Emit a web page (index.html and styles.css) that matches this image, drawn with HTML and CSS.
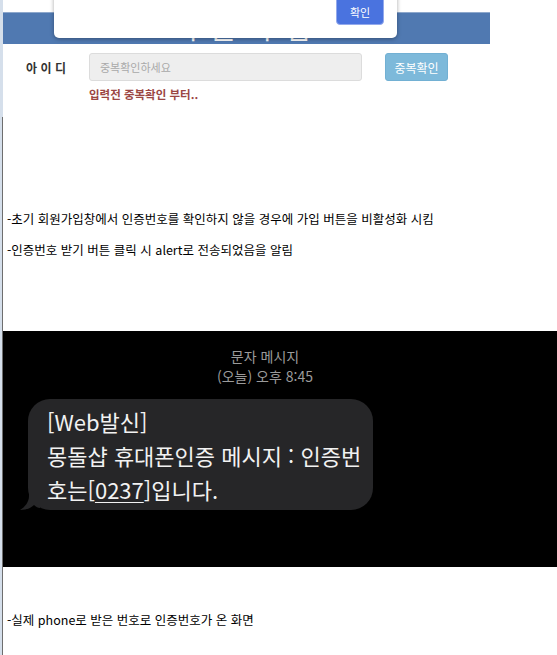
FILE: index.html
```html
<!DOCTYPE html>
<html lang="ko">
<head>
    <meta charset="UTF-8">
    <meta name="viewport" content="width=device-width, initial-scale=1.0">
    <title>회원가입 인증</title>
    <link rel="stylesheet" href="styles.css">
</head>
<body>
    <div class="page">
        <div class="doc">
            <!-- 회원가입 화면 캡처 -->
            <div class="shot-top">
                <div class="band">
                    <div class="band-title">회 원 가 입</div>
                </div>
                <div class="modal">
                    <button class="modal-ok">확인</button>
                </div>
                <div class="form-row">
                    <label class="form-label" for="userId">아 이 디</label>
                    <input class="form-input" id="userId" type="text" placeholder="중복확인하세요">
                    <button class="btn-check">중복확인</button>
                </div>
                <div class="form-error">입력전 중복확인 부터..</div>
            </div>

            <p class="note note-first">-초기 회원가입창에서 인증번호를 확인하지 않을 경우에 가입 버튼을 비활성화 시킴</p>
            <p class="note note-second">-인증번호 받기 버튼 클릭 시 alert로 전송되었음을 알림</p>

            <!-- 문자 메시지 캡처 -->
            <div class="sms">
                <div class="sms-head">
                    <div>문자 메시지</div>
                    <div>(오늘) 오후 8:45</div>
                </div>
                <div class="bubble">
                    <svg class="bubble-tail" width="20" height="24" viewBox="0 0 20 24">
                        <path d="M9 0 L9 10 C9 16 5 21 0 24 C6 24 11 22 14 19 C16 21 18 22 20 22 L20 0 Z" fill="#262628"/>
                    </svg>
                    [Web발신]<br>
                    몽돌샵 휴대폰인증 메시지 : 인증번<br>
                    호는[<span class="code">0237</span>]입니다.
                </div>
            </div>

            <p class="note note-last">-실제 phone로 받은 번호로 인증번호가 온 화면</p>
        </div>
    </div>
</body>
</html>
```

FILE: styles.css
```css
/* 기본 */
body {
    margin: 0;
    background: #fff;
    font-family: "Noto Sans CJK KR", "Noto Sans", sans-serif;
}
.page { border-left: 2px solid #d5dfeb; min-height: 100vh; }
.doc { border-left: 1px solid #6e6e6e; min-height: 100vh; }

/* 회원가입 캡처 */
.shot-top {
    position: relative;
    width: 487px;
    height: 117px;
    margin-left: -1px;
    border-left: 1px solid #d5dfeb;
    background: #fff;
    overflow: hidden;
}
.band {
    margin-top: 12px;
    height: 31px;
    background: #5079b1;
    border-top: 1px solid #8ea8cc;
    overflow: hidden;
}
.band-title {
    text-align: center;
    color: #fff;
    font-size: 28px;
    line-height: 36px;
    margin-top: -4px;
    padding-right: 8px;
    letter-spacing: 2px;
}
.modal {
    position: absolute;
    left: 51px;
    top: -10px;
    width: 343px;
    height: 48px;
    background: #fff;
    border-radius: 0 0 5px 5px;
    box-shadow: 0 1px 4px rgba(0, 0, 0, 0.35);
}
.modal-ok {
    position: absolute;
    left: 282px;
    top: 3px;
    width: 48px;
    height: 32px;
    padding: 6px 0 0;
    background: #4a73df;
    border: 1px solid #93a9ec;
    border-radius: 4px;
    color: #fff;
    font-family: inherit;
    font-size: 11px;
}

.form-row {
    display: flex;
    align-items: center;
    margin-top: 9px;
    height: 28px;
}
.form-label {
    width: 86px;
    text-align: center;
    font-size: 12px;
    font-weight: bold;
    color: #333;
}
.form-input {
    box-sizing: border-box;
    width: 273px;
    height: 28px;
    padding: 0 10px;
    background: #eee;
    border: 1px solid #dcdcdc;
    border-radius: 3px;
    font-family: inherit;
    font-size: 11px;
}
.form-input::placeholder { color: #a9a9a9; }
.btn-check {
    box-sizing: border-box;
    width: 63px;
    height: 28px;
    margin-left: 23px;
    padding: 0;
    background: #7db9da;
    border: 1px solid #72b0d3;
    border-radius: 3px;
    color: #fff;
    font-family: inherit;
    font-size: 12px;
}
.form-error {
    margin: 5px 0 0 86px;
    font-size: 11.5px;
    font-weight: bold;
    color: #9b4643;
}

/* 설명 문단 */
.note {
    margin: 0;
    padding-left: 4px;
    font-size: 12.5px;
    line-height: 18px;
    color: #000;
}
.note-first { margin-top: 93px; }
.note-second { margin-top: 13px; }
.note-last { margin-top: 44px; }

/* 문자 캡처 */
.sms {
    margin-top: 72px;
    height: 236px;
    background: #000;
    overflow: hidden;
}
.sms-head {
    padding: 15px 30px 0 0;
    text-align: center;
    color: #9b9b9b;
    font-size: 14px;
    line-height: 20px;
}
.bubble {
    position: relative;
    box-sizing: border-box;
    width: 345px;
    height: 111px;
    margin: 13px 0 0 25px;
    padding: 5px 0 0 19px;
    background: #262628;
    border-radius: 22px;
    color: #f2f2f2;
    font-size: 22px;
    line-height: 34px;
    white-space: nowrap;
}
.bubble-tail {
    position: absolute;
    left: -8px;
    bottom: 0;
}
.code {
    text-decoration: underline;
    text-decoration-thickness: 1px;
    text-underline-offset: 3px;
}
```
